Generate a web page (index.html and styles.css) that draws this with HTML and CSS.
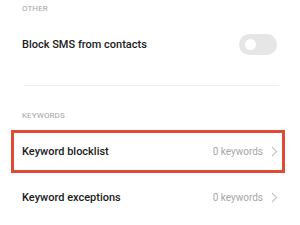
FILE: index.html
```html
<!DOCTYPE html>
<html>
<head>
    <title>Blocklist settings</title>
    <link rel="stylesheet" href="styles.css">
</head>
<body>
    <div class="settings">
        <!-- Other -->
        <p class="section-title section-title--first">OTHER</p>
        <div class="setting-row">
            <span class="setting-label">Block SMS from contacts</span>
            <span class="toggle"><span class="toggle-knob"></span></span>
        </div>

        <hr class="divider">

        <!-- Keywords -->
        <p class="section-title">KEYWORDS</p>
        <div class="setting-row highlighted">
            <span class="setting-label">Keyword blocklist</span>
            <span class="setting-value">0 keywords</span>
            <svg class="chevron" width="7" height="11" viewBox="0 0 7 11">
                <path d="M1 1 L5.5 5.5 L1 10" fill="none" stroke="#c4c4c4" stroke-width="1.1"/>
            </svg>
        </div>
        <div class="setting-row">
            <span class="setting-label">Keyword exceptions</span>
            <span class="setting-value">0 keywords</span>
            <svg class="chevron" width="7" height="11" viewBox="0 0 7 11">
                <path d="M1 1 L5.5 5.5 L1 10" fill="none" stroke="#c4c4c4" stroke-width="1.1"/>
            </svg>
        </div>
    </div>
</body>
</html>
```

FILE: styles.css
```css
body {
    font-family: Roboto, "Noto Sans", sans-serif;
    margin: 0;
    background-color: white;
    width: 300px;
    height: 225px;
    overflow: hidden;
}

.section-title {
    margin: 0;
    padding: 25px 22px 0;
    height: 42px;
    box-sizing: border-box;
    font-size: 8px;
    line-height: 10px;
    color: #a3a3a3;
    letter-spacing: 0.1px;
}

.section-title--first {
    padding-top: 4px;
    height: 21px;
}

.setting-row {
    position: relative;
    display: flex;
    align-items: center;
    height: 46px;
    padding: 0 22px;
}

.setting-label {
    flex: 1;
    font-size: 11px;
    font-weight: 500;
    color: #1c1c1c;
}

.setting-value {
    font-size: 10px;
    color: #a6a6a6;
}

.chevron {
    margin-left: 8px;
}

.toggle {
    display: flex;
    align-items: center;
    width: 38px;
    height: 21px;
    border-radius: 11px;
    background-color: #e6e6e6;
    margin-right: 1px;
}

.toggle-knob {
    width: 11px;
    height: 11px;
    margin-left: 6px;
    border-radius: 50%;
    background-color: white;
}

.divider {
    border: none;
    border-top: 1px solid #efefef;
    margin: 18px 21px 0 24px;
}

.highlighted::after {
    content: "";
    position: absolute;
    left: 11px;
    right: 15px;
    top: 2px;
    bottom: 1px;
    border: 3.5px solid #e04a33;
}
```
